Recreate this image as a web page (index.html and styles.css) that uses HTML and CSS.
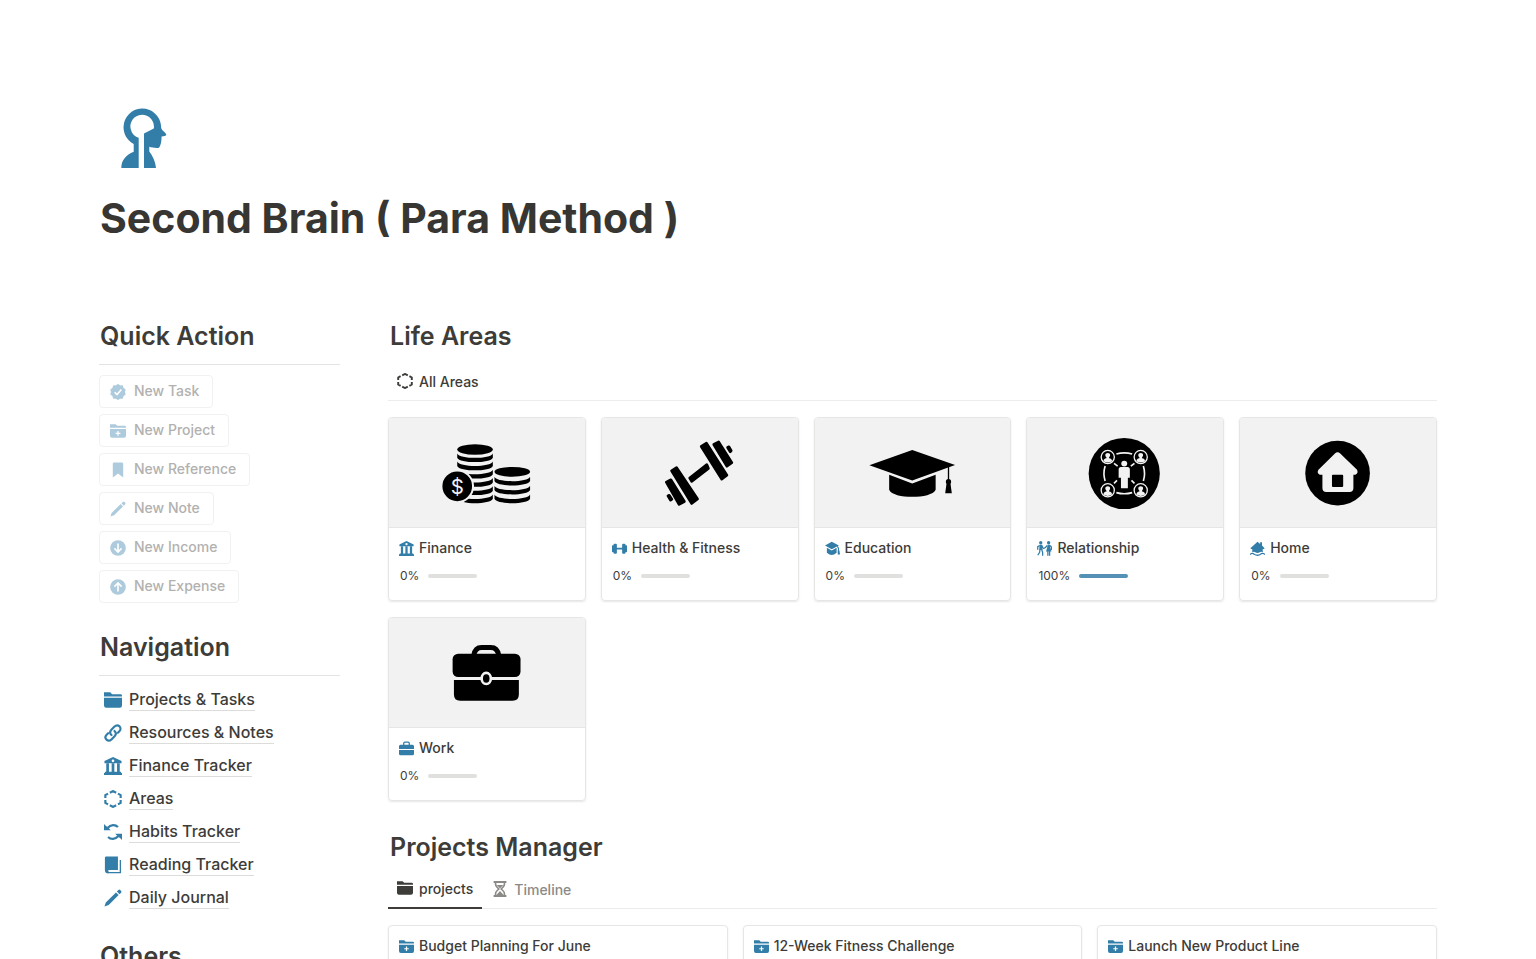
FILE: index.html
```html
<!DOCTYPE html>
<html lang="en">
<head>
  <meta charset="UTF-8">
  <meta name="viewport" content="width=device-width, initial-scale=1.0">
  <title>Second Brain ( Para Method )</title>
  <link rel="stylesheet" href="styles.css">
</head>
<body>
  <!-- Icon set -->
  <svg class="sprite" aria-hidden="true">
    <symbol id="folder" viewBox="0 0 20 20">
      <path d="M0 1.500h7l2 2h9.500Q20 3.500 20 5v1H0zM0 7.500h20V16q0 2.500-2.500 2.500h-15Q0 18.500 0 16z"/>
    </symbol>
    <symbol id="folder-plus" viewBox="0 0 20 20">
      <path d="M0 1.500h7l2 2h9.500Q20 3.500 20 5v1H0zM0 7.500h20V16q0 2.500-2.500 2.500h-15Q0 18.500 0 16z"/>
      <path d="M10 10v6M7 13h6" stroke="#fff" stroke-width="1.6"/>
    </symbol>
    <symbol id="link" viewBox="0 0 20 20">
      <g fill="none" stroke="currentColor" stroke-width="2.400" stroke-linecap="round">
        <path d="M8.300 12.300C6.300 10.300 6.700 8 8.200 6.500l3.500-3.600c1.700-1.700 4-1.700 5.500-.3 1.600 1.600 1.500 3.900-.1 5.500l-1.700 1.700"/>
        <path d="M11.700 7.700c2 2 1.600 4.300.1 5.800l-3.500 3.600c-1.700 1.700-4 1.700-5.500.3-1.600-1.600-1.500-3.900.1-5.500l1.700-1.700"/>
      </g>
    </symbol>
    <symbol id="bank" viewBox="0 0 20 20">
      <path fill-rule="evenodd" d="M10 0l9.500 4.500V7H.5V4.500zM10 2.700a1.500 1.500 0 1 0 0 3a1.500 1.500 0 0 0 0-3z"/>
      <path d="M2.500 7h3v10h-3zM8.500 7h3v10h-3zM14.500 7h3v10h-3zM1 16.500h18v1.200h1V20H0v-2.300h1z"/>
    </symbol>
    <symbol id="hexagon" viewBox="0 0 20 20">
      <path d="M6.500 3L10 1.200 13.500 3M15.500 4l3 1.600v3.300M18.500 11.100v3.300L15.500 16M13.500 17L10 18.800 6.500 17M4.500 16l-3-1.600v-3.300M1.500 8.900V5.600L4.500 4" fill="none" stroke="currentColor" stroke-width="2.400"/>
    </symbol>
    <symbol id="sync" viewBox="0 0 20 20">
      <path d="M4 5.500c3.500-4 8.500-4 11.500-1M16 14.500c-3.500 4-8.500 4-11.500 1" fill="none" stroke="currentColor" stroke-width="2.500"/>
      <path d="M0 1l2.200 2.200L4 4.500 7.500 8H0zM20 19l-2.200-2.200L16 15.500 12.500 12H20z"/>
    </symbol>
    <symbol id="book" viewBox="0 0 20 20">
      <path d="M2.500.5h13v15h-12q-2.500 0-2.500-2.500V2Q1 .5 2.500.5z"/>
      <path d="M2 15q.5 3.500 3.500 3.500h12.700V4.500" fill="none" stroke="currentColor" stroke-width="1.500"/>
      <path d="M1 13v2.500q0 4 4 4V16z"/>
    </symbol>
    <symbol id="pencil" viewBox="0 0 20 20">
      <path d="M13.300 3.800l3 3L5.200 17.700 0.500 19.500l1.500-4.500zM14.300 2.800L16 1.100q1-1 2 0l1 1q1 1 0 2l-1.700 1.700z"/>
    </symbol>
    <symbol id="check" viewBox="0 0 20 20">
      <path d="M10 1l2.300 1.800 3-.1.800 2.900 2.500 1.700-1 2.700 1 2.700-2.500 1.700-.8 2.900-3-.1L10 19l-2.300-1.800-3 .1-.8-2.900-2.500-1.700 1-2.700-1-2.700 2.500-1.700.8-2.900 3 .1z" stroke="currentColor" stroke-width="2" stroke-linejoin="round"/>
      <path d="M5.800 10.300l3 3 5.400-6.300" fill="none" stroke="#fff" stroke-width="2"/>
    </symbol>
    <symbol id="bookmark" viewBox="0 0 20 20">
      <path d="M3.500 2q0-1.500 1.500-1.500h10q1.500 0 1.500 1.500v17.500L10 14.500l-6.500 5z"/>
    </symbol>
    <symbol id="down" viewBox="0 0 20 20">
      <circle cx="10" cy="10" r="9.800"/>
      <path d="M10 4.500v10.500M5.500 10.500l4.500 4.500 4.500-4.500" fill="none" stroke="#fff" stroke-width="2"/>
    </symbol>
    <symbol id="up" viewBox="0 0 20 20">
      <circle cx="10" cy="10" r="9.800"/>
      <path d="M10 15.500V5M5.500 9.500L10 5l4.500 4.500" fill="none" stroke="#fff" stroke-width="2"/>
    </symbol>
    <symbol id="dumbbell" viewBox="0 0 20 20">
      <path d="M5 9h10v2.400H5z"/>
      <rect x="0" y="5.500" width="3" height="9.500" rx="1"/>
      <rect x="2" y="3.500" width="4.500" height="13.500" rx="1.500"/>
      <rect x="13.500" y="3.500" width="4.500" height="13.500" rx="1.500"/>
      <rect x="17" y="5.500" width="3" height="9.500" rx="1"/>
    </symbol>
    <symbol id="cap" viewBox="0 0 20 20">
      <path d="M9 1l9.500 5-9.500 5L0 6zM2.500 9L9 12.600 15.500 9v6.500Q12 18.500 9 18.500T2.500 15.500z"/>
      <path d="M16.500 7l1.500 3v7" fill="none" stroke="currentColor" stroke-width="1.500"/>
      <path d="M17 12.500h2.200L20 18h-3z"/>
    </symbol>
    <symbol id="people" viewBox="0 0 20 20">
      <circle cx="5" cy="2.300" r="2.200"/>
      <circle cx="15.500" cy="2.300" r="2.200"/>
      <path d="M3.300 5h3.500l.5 7H3z"/>
      <path d="M3.500 6L1 7.500v4M6.500 6l1.200 3 2 1.300M4 11l-.5 4-2.500 4M6 11l1.500 4v4.500M13.500 6l-2 2.500-1.700 1.200M17.500 6L19.300 8v4M14.500 13v6.500M16.800 13v6.500" fill="none" stroke="currentColor" stroke-width="1.700"/>
      <path d="M14 5h3.300l.5 4 1.500 5h-7.300l1.500-5z"/>
    </symbol>
    <symbol id="house" viewBox="0 0 20 20">
      <path d="M10 1l3.500 3V1.500H16v4.500l3.500 3.500-1 1.300H17V15q-2-1.500-4 0-3 1.800-6 0-2-1.500-4 0v-4.200H1.500L.5 9.500z"/>
      <path d="M0 18q3-2.800 6 0 4 2 7.500 0 3.300-2.800 6.500 0" fill="none" stroke="currentColor" stroke-width="1.700"/>
    </symbol>
    <symbol id="briefcase" viewBox="0 0 20 20">
      <path d="M6.300 6V3q0-1.500 1.500-1.500h4.400q1.500 0 1.500 1.500v3" fill="none" stroke="currentColor" stroke-width="1.700"/>
      <path d="M2 5h16q2 0 2 2v3.500H0V7q0-2 2-2zM0 12h20v5q0 2-2 2H2q-2 0-2-2z"/>
    </symbol>
    <symbol id="hourglass" viewBox="0 0 20 20">
      <path d="M2 0h16v2.500H2zM2 17.500h16V20H2z"/>
      <path d="M4.500 2v2.500q0 2 4 5.500-4 3.500-4 5.500V18M15.500 2v2.500q0 2-4 5.500 4 3.500 4 5.500V18" fill="none" stroke="currentColor" stroke-width="2"/>
      <path d="M6 5h8l-4 4.500zM10 12.500l4.500 5h-9z"/>
    </symbol>
  </svg>

  <div class="page">
    <header class="page-header">
      <svg class="page-icon" viewBox="0 0 60 60" aria-hidden="true">
        <path d="M24.700 60H7.300C7.300 52 12 47 19.700 43.700V36C13 32 9.500 26 9.500 19A18.800 18.800 0 0 1 47 17.500C47 20 47.500 21.500 49 22.700C50.500 24 52.500 26 52.300 26.700C52 27.700 50 28.300 47.600 28.500C47.600 34 46.500 38 45 39.700C42 40.300 38 39.500 35.300 38.700V43.500C38 47 41.500 53 42 60H30V25.500L39.800 20.500A11.800 11.800 0 1 0 24.700 29.800Z"/>
      </svg>
      <h1>Second Brain ( Para Method )</h1>
    </header>

    <div class="columns">
      <aside class="sidebar">
        <section>
          <h2>Quick Action</h2>
          <div class="actions">
            <button type="button"><svg class="icon"><use href="#check"/></svg>New Task</button>
            <button type="button"><svg class="icon"><use href="#folder-plus"/></svg>New Project</button>
            <button type="button"><svg class="icon"><use href="#bookmark"/></svg>New Reference</button>
            <button type="button"><svg class="icon"><use href="#pencil"/></svg>New Note</button>
            <button type="button"><svg class="icon"><use href="#down"/></svg>New Income</button>
            <button type="button"><svg class="icon"><use href="#up"/></svg>New Expense</button>
          </div>
        </section>

        <section>
          <h2>Navigation</h2>
          <nav class="nav">
            <a href="#"><svg class="icon"><use href="#folder"/></svg><span>Projects &amp; Tasks</span></a>
            <a href="#"><svg class="icon"><use href="#link"/></svg><span>Resources &amp; Notes</span></a>
            <a href="#"><svg class="icon"><use href="#bank"/></svg><span>Finance Tracker</span></a>
            <a href="#"><svg class="icon"><use href="#hexagon"/></svg><span>Areas</span></a>
            <a href="#"><svg class="icon"><use href="#sync"/></svg><span>Habits Tracker</span></a>
            <a href="#"><svg class="icon"><use href="#book"/></svg><span>Reading Tracker</span></a>
            <a href="#"><svg class="icon"><use href="#pencil"/></svg><span>Daily Journal</span></a>
          </nav>
        </section>

        <section>
          <h2>Others</h2>
        </section>
      </aside>

      <main class="content">
        <section class="areas">
          <h2>Life Areas</h2>
          <div class="tabs">
            <button type="button" class="tab"><svg class="icon"><use href="#hexagon"/></svg>All Areas</button>
          </div>
          <div class="area-grid">
            <article class="card">
              <svg class="cover" viewBox="27 171 594 330" aria-hidden="true">
                <defs>
                  <path id="coin" d="M-54 0C-48 18 48 18 54 0V13C48 31-48 31-54 13Z"/>
                </defs>
                <ellipse cx="288" cy="266" rx="54" ry="16"/>
                <use href="#coin" x="288" y="278"/>
                <use href="#coin" x="288" y="303"/>
                <use href="#coin" x="288" y="328"/>
                <use href="#coin" x="288" y="353"/>
                <use href="#coin" x="288" y="378"/>
                <use href="#coin" x="288" y="403"/>
                <ellipse cx="401" cy="334" rx="54" ry="15"/>
                <use href="#coin" x="401" y="349"/>
                <use href="#coin" x="401" y="376"/>
                <use href="#coin" x="401" y="403"/>
                <circle cx="234" cy="378" r="48" stroke="#f2f2f2" stroke-width="6"/>
                <text class="dollar" x="234" y="400" text-anchor="middle">$</text>
              </svg>
              <div class="card-body">
                <h3><svg class="icon"><use href="#bank"/></svg>Finance</h3>
                <div class="progress">0%<div class="bar"><div class="fill" style="width: 0%"></div></div></div>
              </div>
            </article>

            <article class="card">
              <svg class="cover" viewBox="20 21 594 330" aria-hidden="true">
                <g stroke="#000" stroke-width="8" stroke-linejoin="round">
                  <path d="M231 181l15-10 64 95-18 14zM215 215l14-7 41 66-16 9zM220 257l4-2 8 12-4 3z"/>
                  <path d="M286 203l52-41 5 12-51 39zM321 107l16-10 62 97-16 12zM359 101l15-8 40 63-15 11zM401 110l4-2 7 12-3 3z"/>
                </g>
              </svg>
              <div class="card-body">
                <h3><svg class="icon"><use href="#dumbbell"/></svg>Health &amp; Fitness</h3>
                <div class="progress">0%<div class="bar"><div class="fill" style="width: 0%"></div></div></div>
              </div>
            </article>

            <article class="card">
              <svg class="cover" viewBox="18 21 594 330" aria-hidden="true">
                <path d="M183 164L313 118l130 45-130 47z"/>
                <path d="M243 193l70 26 71-26v45c-12 29-130 29-141 0z"/>
                <path d="M423 168v46" stroke="#000" stroke-width="4"/>
                <circle cx="423" cy="214" r="8"/>
                <path d="M417 219h12l4 30h-20z"/>
              </svg>
              <div class="card-body">
                <h3><svg class="icon"><use href="#cap"/></svg>Education</h3>
                <div class="progress">0%<div class="bar"><div class="fill" style="width: 0%"></div></div></div>
              </div>
            </article>

            <article class="card">
              <svg class="cover" viewBox="21 21 594 330" aria-hidden="true">
                <defs>
                  <g id="member">
                    <circle r="20" fill="#000" stroke="#f2f2f2" stroke-width="4"/>
                    <path d="M-13 13q0-8 9-9v-3c-5-4-5-13 4-13s9 9 4 13v3q9 1 9 9-13 8-26 0z" fill="#f2f2f2"/>
                  </g>
                </defs>
                <circle cx="316" cy="189" r="108"/>
                <g fill="none" stroke="#f2f2f2" stroke-width="5">
                  <path d="M292 130q24-7 48 0M292 247q24 7 48 0M258 166q-7 23 0 46M374 166q7 23 0 46"/>
                  <path d="M285 158l11 9M347 158l-11 9M285 219l9-9M347 219l-9-9"/>
                </g>
                <use href="#member" x="266" y="139"/>
                <use href="#member" x="366" y="139"/>
                <use href="#member" x="266" y="240"/>
                <use href="#member" x="366" y="240"/>
                <g fill="#f2f2f2">
                  <circle cx="316" cy="159" r="9"/>
                  <path d="M306 169h20q7 0 7 8v25h-6v32h-21v-32h-7v-25q0-8 7-8z"/>
                </g>
              </svg>
              <div class="card-body">
                <h3><svg class="icon"><use href="#people"/></svg>Relationship</h3>
                <div class="progress">100%<div class="bar"><div class="fill" style="width: 100%"></div></div></div>
              </div>
            </article>

            <article class="card">
              <svg class="cover" viewBox="29 21 594 330" aria-hidden="true">
                <circle cx="325" cy="188" r="98"/>
                <path d="M317 128q8-7 16 0l51 50q5 10-5 15h-6v40q0 12-12 12h-70q-12 0-12-12v-40h-8q-10-5-4-15z" fill="#f2f2f2"/>
                <rect x="308" y="193" width="34" height="37" rx="3"/>
              </svg>
              <div class="card-body">
                <h3><svg class="icon"><use href="#house"/></svg>Home</h3>
                <div class="progress">0%<div class="bar"><div class="fill" style="width: 0%"></div></div></div>
              </div>
            </article>

            <article class="card">
              <svg class="cover" viewBox="27 21 594 330" aria-hidden="true">
                <path d="M284 134q4-24 24-24h28q20 0 24 24" fill="none" stroke="#000" stroke-width="15"/>
                <rect x="220" y="129" width="206" height="71" rx="17"/>
                <path d="M224 209h197v44q0 19-19 19H243q-19 0-19-19z"/>
                <ellipse cx="322" cy="204" rx="14" ry="17" stroke="#f2f2f2" stroke-width="8"/>
              </svg>
              <div class="card-body">
                <h3><svg class="icon"><use href="#briefcase"/></svg>Work</h3>
                <div class="progress">0%<div class="bar"><div class="fill" style="width: 0%"></div></div></div>
              </div>
            </article>
          </div>
        </section>

        <section class="projects">
          <h2>Projects Manager</h2>
          <div class="tabs">
            <button type="button" class="tab active"><svg class="icon"><use href="#folder"/></svg>projects</button>
            <button type="button" class="tab muted"><svg class="icon"><use href="#hourglass"/></svg>Timeline</button>
          </div>
          <div class="project-grid">
            <article class="card">
              <div class="card-body">
                <h3><svg class="icon"><use href="#folder-plus"/></svg>Budget Planning For June</h3>
              </div>
            </article>
            <article class="card">
              <div class="card-body">
                <h3><svg class="icon"><use href="#folder-plus"/></svg>12-Week Fitness Challenge</h3>
              </div>
            </article>
            <article class="card">
              <div class="card-body">
                <h3><svg class="icon"><use href="#folder-plus"/></svg>Launch New Product Line</h3>
              </div>
            </article>
          </div>
        </section>
      </main>
    </div>
  </div>
</body>
</html>
```
FILE: styles.css
```css
* {
  box-sizing: border-box;
}
body {
  margin: 0;
  background-color: #fff;
  color: #3d3c39;
  font-family: Inter, "Liberation Sans", sans-serif;
  font-size: 14px;
}
h1, h2, h3 {
  margin: 0;
}
button {
  font: inherit;
  color: inherit;
  background: none;
  border: none;
  cursor: pointer;
}
.sprite {
  display: none;
}
.icon {
  flex: none;
  width: 18px;
  height: 18px;
  color: #337ea9;
  fill: currentColor;
}
.page {
  padding: 108px 99px 0;
}
.page-icon {
  display: block;
  width: 60px;
  height: 60px;
  margin-left: 15px;
  fill: #337ea9;
}
h1 {
  margin-top: 25px;
  padding-left: 1px;
  font-size: 41px;
  font-weight: 700;
  line-height: 50px;
  color: #373632;
}
h2 {
  padding-left: 1px;
  font-size: 25px;
  font-weight: 600;
  line-height: 32px;
}
.columns {
  display: flex;
  gap: 48px;
  margin-top: 77px;
}

/* Sidebar */
.sidebar {
  flex: none;
  width: 241px;
  display: flex;
  flex-direction: column;
  gap: 26px;
}
.sidebar h2 {
  padding-bottom: 12px;
  border-bottom: 1px solid #e3e3e2;
}
.actions {
  display: flex;
  flex-direction: column;
  align-items: flex-start;
  gap: 6px;
  margin: 10px 0 2px;
}
.actions button {
  display: flex;
  align-items: center;
  gap: 8px;
  height: 33px;
  padding: 0 13px 2px 10px;
  border: 1px solid #f0f1f1;
  border-radius: 4px;
  font-weight: 500;
  color: #b2b1b0;
}
.actions .icon {
  width: 16px;
  height: 16px;
  margin-top: 2px;
  color: #adcbdc;
}
.nav {
  display: flex;
  flex-direction: column;
  align-items: flex-start;
  margin-top: 7px;
}
.nav a {
  display: flex;
  align-items: center;
  gap: 7px;
  height: 33px;
  padding-left: 5px;
  font-size: 16px;
  font-weight: 500;
  color: inherit;
  text-decoration: none;
}
.nav span {
  line-height: 21px;
  border-bottom: 1px solid #dcdcdb;
}

/* Main column */
.content {
  flex: 1;
  min-width: 0;
}
.content h2 {
  padding-left: 2px;
}
.tabs {
  display: flex;
  gap: 1px;
  height: 40px;
  border-bottom: 1px solid #ececeb;
}
.tab {
  display: flex;
  align-items: center;
  gap: 6px;
  height: 40px;
  padding: 0 9px;
  font-weight: 500;
}
.tab .icon {
  width: 16px;
  height: 16px;
  color: inherit;
}
.tab.active {
  border-bottom: 2px solid #3d3c39;
}
.tab.muted {
  color: #8b8a87;
}
.areas .tabs {
  margin-top: 9px;
}
.area-grid {
  display: grid;
  grid-template-columns: repeat(auto-fill, minmax(190px, 1fr));
  gap: 16px 15px;
  margin-top: 16px;
}
.card {
  border: 1px solid #e6e6e5;
  border-radius: 4px;
  box-shadow: 0 1px 2px rgba(0, 0, 0, 0.1);
  overflow: hidden;
}
.cover {
  display: block;
  width: 100%;
  height: 110px;
  background-color: #f2f2f2;
  border-bottom: 1px solid #e6e6e5;
}
.dollar {
  font-size: 62px;
  fill: #f2f2f2;
}
.card-body {
  padding: 9px 10px 14px;
}
.card h3 {
  display: flex;
  align-items: center;
  gap: 5px;
  font-size: 14px;
  font-weight: 500;
  line-height: 22px;
}
.card .icon {
  width: 15px;
  height: 15px;
}
.progress {
  display: flex;
  align-items: center;
  gap: 9px;
  margin-top: 7px;
  padding-left: 1px;
  font-size: 12px;
  line-height: 20px;
}
.bar {
  width: 49px;
  height: 4px;
  border-radius: 2px;
  background-color: #e0e0df;
  overflow: hidden;
}
.fill {
  height: 100%;
  background-color: #5590b6;
}
.projects {
  margin-top: 30px;
}
.projects .tabs {
  margin-top: 6px;
}
.project-grid {
  display: grid;
  grid-template-columns: repeat(3, 1fr);
  gap: 15px;
  margin-top: 16px;
}
.project-grid .card {
  min-height: 120px;
}
```
